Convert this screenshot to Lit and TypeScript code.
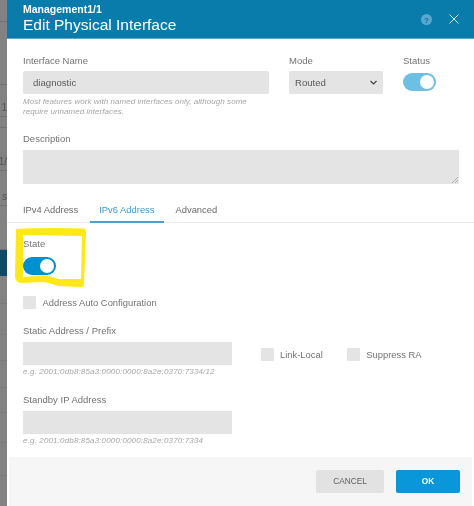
import { LitElement, html, css } from "lit";
import { customElement } from "lit/decorators.js";

const STRIP_TOP: [number, string][] = [[22, ""], [63, ""], [32, "1"], [11, ""], [43, "1/"], [35, "s"], [44, ""]];
const STRIP_BOTTOM = [28, 31, 26, 27, 25, 30, 33];

@customElement("app-root")
export class AppRoot extends LitElement {
  static styles = css`
    :host { display: block; width: 474px; height: 506px; overflow: hidden; background: #fff; font-family: "Liberation Sans", Arial, sans-serif; color: #666; }
    * { box-sizing: border-box; }
    .page { display: flex; height: 506px; filter: blur(0.35px); }
    .strip { width: 7px; flex: none; background: #828282; display: flex; flex-direction: column; overflow: hidden; }
    .row { flex: none; border-bottom: 1px solid #727272; font-size: 10px; line-height: 11px; color: #555; display: flex; justify-content: flex-end; align-items: flex-end; padding-bottom: 3px; white-space: nowrap; }
    .row.faint { border-bottom-color: #7b7b7b; }
    .dark { height: 26px; flex: none; background: #0e4a63; }
    .modal { width: 467px; height: 506px; flex: none; background: #fff; display: flex; flex-direction: column; }
    .head { height: 39px; flex: none; background: #0a7cac; border-bottom: 1px solid #58a9c8; color: #fff; padding: 3px 15px 0 16px; display: flex; justify-content: space-between; }
    .sup { font-size: 10.5px; font-weight: 700; line-height: 13px; }
    .ttl { font-size: 15.5px; line-height: 17px; }
    .tools { display: flex; align-items: center; gap: 17px; margin-top: -3px; }
    .body { flex: 1; padding: 0 15px 0 16px; }
    .lbl { font-size: 9.5px; line-height: 12px; color: #737373; }
    .r1 { display: grid; grid-template-columns: 246px 94px 1fr; column-gap: 20px; padding-top: 16px; }
    .inp { background: #e4e4e4; border-radius: 2px; height: 23px; margin-top: 4px; font-size: 9.6px; line-height: 23px; color: #5a5a5a; padding-left: 10px; }
    .sel { display: flex; justify-content: space-between; align-items: center; padding: 0 6px; }
    .hint { font-size: 8px; font-style: italic; line-height: 10px; color: #a6a6a6; margin-top: 3px; white-space: nowrap; letter-spacing: .05px; }
    .tog { display: block; width: 33px; height: 18px; border-radius: 9px; position: relative; background: #0090cf; }
    .tog::after { content: ""; position: absolute; right: 2px; top: 2px; width: 14px; height: 14px; border-radius: 50%; background: #fff; }
    .tog.light { background: #6dbfe3; margin-top: 6px; }
    .desc { margin-top: 16px; }
    .area { background: #e4e4e4; height: 34px; margin-top: 5px; position: relative; }
    .grip { position: absolute; right: 1px; bottom: 1px; }
    .tabs { display: flex; gap: 2px; margin: 14px -15px 0 -16px; padding: 0 0 0 6.5px; border-bottom: 1px solid #ececec; height: 25px; font-size: 9.4px; }
    .tab { padding: 6px 9.5px 0; line-height: 12px; color: #6a6a6a; height: 25px; }
    .tab.on { color: #3f9cc6; border-bottom: 2px solid #4aa3cb; }
    .state { position: relative; margin-top: 15px; height: 37px; }
    .mark { position: absolute; left: -9px; top: -10px; width: 72px; height: 60px; }
    .st { position: relative; }
    .st .tog { margin-top: 7px; }
    .check { display: flex; align-items: center; gap: 6.5px; font-size: 9.4px; color: #737373; height: 14px; white-space: nowrap; }
    .box { width: 13px; height: 13px; background: #e4e4e4; border-radius: 1px; flex: none; }
    .auto { margin-top: 20px; }
    .r2 { display: flex; align-items: flex-start; margin-top: 16px; }
    .f { width: 209px; flex: none; }
    .c2 { margin-left: 28.5px; margin-top: 22px; }
    .c3 { margin-left: 24px; margin-top: 22px; }
    .inp2 { background: #e4e4e4; height: 23px; margin-top: 5px; }
    .hint2 { font-size: 8px; font-style: italic; line-height: 10px; color: #a6a6a6; margin-top: 2px; white-space: nowrap; letter-spacing: .15px; }
    .standby { margin-top: 17px; }
    .foot { height: 49px; flex: none; background: #f6f6f6; display: flex; justify-content: flex-end; align-items: center; gap: 12px; padding-right: 12px; margin: 0 2px; }
    .btn { height: 23px; border-radius: 2px; font-size: 8.3px; line-height: 23px; text-align: center; }
    .cancel { width: 68px; background: #e2e2e2; color: #5f5f5f; }
    .ok { width: 64px; background: #0a97d9; color: #fff; font-weight: 700; }
  `;
  render() {
    return html`<div class="page">
      <div class="strip">
        ${STRIP_TOP.map(([h, t]) => html`<div class="row" style="height:${h}px">${t}</div>`)}
        <div class="dark"></div>
        ${STRIP_BOTTOM.map((h) => html`<div class="row faint" style="height:${h}px"></div>`)}
      </div>
      <div class="modal">
        <div class="head">
          <div><div class="sup">Management1/1</div><div class="ttl">Edit Physical Interface</div></div>
          <div class="tools">
            <svg width="11" height="11" viewBox="0 0 11 11"><circle cx="5.5" cy="5.5" r="5.5" fill="#58a8cf"/><text x="5.5" y="8.5" text-anchor="middle" font-size="8" font-weight="700" fill="#0a6f9d" font-family="Liberation Sans">?</text></svg>
            <svg width="10" height="10" viewBox="0 0 10 10"><path d="M.5 .5l9 9M9.5 .5l-9 9" stroke="#d6edf6" stroke-width="1" fill="none"/></svg>
          </div>
        </div>
        <div class="body">
          <div class="r1">
            <div><div class="lbl">Interface Name</div><div class="inp">diagnostic</div>
              <div class="hint">Most features work with named interfaces only, although some<br>require unnamed interfaces.</div></div>
            <div><div class="lbl">Mode</div><div class="inp sel">Routed
              <svg width="7" height="5" viewBox="0 0 7 5"><path d="M.5 1l3 3 3-3" stroke="#444" stroke-width="1.2" fill="none"/></svg></div></div>
            <div><div class="lbl">Status</div><span class="tog light"></span></div>
          </div>
          <div class="desc"><div class="lbl">Description</div><div class="area">
            <svg class="grip" width="6" height="6" viewBox="0 0 6 6"><path d="M0 6L6 0M3 6L6 3" stroke="#9a9a9a" stroke-width=".7"/></svg>
          </div></div>
          <div class="tabs"><div class="tab">IPv4 Address</div><div class="tab on">IPv6 Address</div><div class="tab">Advanced</div></div>
          <div class="state">
            <svg class="mark" viewBox="0 0 72 60"><path fill="#ffe81a" fill-rule="evenodd" d="M2 1Q30-.5 70 .5Q72 1 72 5L70 57Q70 59 66 59L44 58Q36 55 30 54L8 55Q1 55 1 48ZM9 7L9 49L30 47.5Q38 48 44 51L67 51L68 8Z"/></svg>
            <div class="st"><div class="lbl">State</div><span class="tog"></span></div>
          </div>
          <div class="check auto"><span class="box"></span>Address Auto Configuration</div>
          <div class="r2">
            <div class="f"><div class="lbl">Static Address / Prefix</div><div class="inp2"></div><div class="hint2">e.g. 2001:0db8:85a3:0000:0000:8a2e:0370:7334/12</div></div>
            <div class="check c2"><span class="box"></span>Link-Local</div>
            <div class="check c3"><span class="box"></span>Suppress RA</div>
          </div>
          <div class="f standby"><div class="lbl">Standby IP Address</div><div class="inp2"></div><div class="hint2">e.g. 2001:0db8:85a3:0000:0000:8a2e:0370:7334</div></div>
        </div>
        <div class="foot"><div class="btn cancel">CANCEL</div><div class="btn ok">OK</div></div>
      </div>
    </div>`;
  }
}
